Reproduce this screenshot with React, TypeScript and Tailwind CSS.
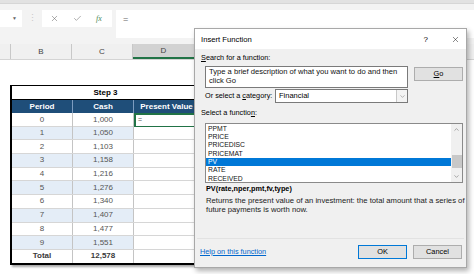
import React from 'react';
import { X, Check, ChevronDown, ChevronUp } from 'lucide-react';

const rows = [
  ['0', '1,000'],
  ['1', '1,050'],
  ['2', '1,103'],
  ['3', '1,158'],
  ['4', '1,216'],
  ['5', '1,276'],
  ['6', '1,340'],
  ['7', '1,407'],
  ['8', '1,477'],
  ['9', '1,551'],
];

const functions = ['PPMT', 'PRICE', 'PRICEDISC', 'PRICEMAT', 'PV', 'RATE', 'RECEIVED'];

function FormulaBar() {
  return (
    <>
      <div className="h-[4px] bg-[#e2e2e2] border-b border-[#d6d6d6]" />
      <div className="h-[40px] bg-[#f3f3f3] flex items-start pt-[6px]">
        <div className="w-[22px] h-[17px] bg-white flex items-center justify-end pr-[5px]">
          <span className="text-[5px] text-[#666]">▼</span>
        </div>
        <div className="w-[20px] h-[17px] flex items-center justify-center text-[9px] text-[#c8c8c8]">⋮</div>
        <div className="w-[70px] h-[17px] bg-white flex items-center pl-[8px] gap-[14px]">
          <X className="w-[9px] h-[9px] text-[#666]" strokeWidth={1.4} />
          <Check className="w-[9px] h-[9px] text-[#666]" strokeWidth={1.4} />
          <span className="text-[8px] italic text-[#4c8a5a] font-['Liberation_Serif',serif]">fx</span>
        </div>
        <div className="ml-[4px] flex-1 h-[28px] bg-white pl-[7px] pt-[3px] text-[9px] text-[#666]">=</div>
      </div>
      <div className="h-[16px] bg-[#f0f0f0] flex text-[8px] text-[#444] border-b border-[#d4d4d4]">
        <div className="w-[11px] border-r border-[#c8c8c8]" />
        <div className="w-[61px] border-r border-[#c8c8c8] flex items-center justify-center">B</div>
        <div className="w-[61px] border-r border-[#c8c8c8] flex items-center justify-center">C</div>
        <div className="w-[61px] bg-[#d2d2d2] border-b-2 border-[#217346] flex items-center justify-center">D</div>
        <div className="flex-1" />
      </div>
    </>
  );
}

function StepTable() {
  return (
    <div className="ml-[10px] mt-[25px] w-[190px] border-l-2 border-t border-r border-b-2 border-black shadow-[2px_2px_2px_rgba(0,0,0,0.35)] text-[8px]">
      <div className="h-[14px] flex items-center justify-center font-bold text-black border-b border-black">Step 3</div>
      <div className="h-[13px] bg-[#1f4e79] grid grid-cols-[61px_61px_1fr] text-white font-bold">
        <div className="flex items-center justify-center border-r border-[#7d9cc0]">Period</div>
        <div className="flex items-center justify-center border-r border-[#7d9cc0]">Cash</div>
        <div className="flex items-center justify-center">Present Value</div>
      </div>
      {rows.map(([p, c], i) => (
        <div
          key={p}
          className={`h-[13.7px] grid grid-cols-[61px_61px_1fr] text-[#555] border-b border-[#d6d6d6] ${i % 2 === 1 ? 'bg-[#e4edf7]' : 'bg-white'}`}
        >
          <div className="flex items-center justify-center border-r border-[#c4c4c4]">{p}</div>
          <div className="flex items-center justify-center border-r border-[#c4c4c4]">{c}</div>
          {i === 0 ? (
            <div className="border-2 border-[#217346] bg-white flex items-center pl-[2px] text-[7px]">=</div>
          ) : (
            <div className="bg-white" />
          )}
        </div>
      ))}
      <div className="h-[13px] grid grid-cols-[61px_61px_1fr] font-bold text-[#3a3a3a] bg-white">
        <div className="flex items-center justify-center border-r border-[#c4c4c4]">Total</div>
        <div className="flex items-center justify-center border-r border-[#c4c4c4]">12,578</div>
        <div />
      </div>
    </div>
  );
}

function Button({ label, primary }: { label: React.ReactNode; primary?: boolean }) {
  return (
    <div
      className={`w-[49px] h-[14px] flex items-center justify-center bg-[#e1e1e1] border ${primary ? 'border-[#0078d7] border-[1.5px]' : 'border-[#adadad]'} text-[7.4px] text-black`}
    >
      {label}
    </div>
  );
}

function InsertFunctionDialog() {
  return (
    <div className="absolute left-[194px] top-[28px] w-[273px] h-[240px] bg-[#f0f0f0] border border-[#a8a8a8] shadow-[2px_3px_5px_rgba(0,0,0,0.3)] flex flex-col text-[7.3px] text-black font-['Liberation_Sans',Arial,sans-serif]">
      <div className="h-[20px] bg-white flex items-center pl-[6px] pr-[6px] pt-[1px]">
        <span className="text-[7.7px]">Insert Function</span>
        <span className="ml-auto mr-[23px] text-[8px]">?</span>
        <X className="w-[9px] h-[9px]" strokeWidth={1.2} />
      </div>

      <div className="mt-[4px] ml-[6px] leading-[10px]">
        <span className="underline">S</span>earch for a function:
      </div>

      <div className="mt-[3px] ml-[10px] flex items-start">
        <div className="w-[203px] h-[22px] bg-white border border-[#7a7a7a] px-[3px] pt-[1px] leading-[8.6px] text-[7.6px] text-[#111] whitespace-nowrap overflow-hidden">
          Type a brief description of what you want to do and then
          <br />
          click Go
        </div>
        <div className="ml-[6px] mt-[1px]">
          <Button label={<><span className="underline">G</span>o</>} />
        </div>
      </div>

      <div className="mt-[1px] ml-[10px] flex items-center h-[14px]">
        <span className="w-[70px]">
          Or select a <span className="underline">c</span>ategory:
        </span>
        <div className="w-[133px] h-[14px] bg-white border border-[#7a7a7a] flex items-center">
          <span className="pl-[3px] flex-1 text-[7.5px]">Financial</span>
          <div className="w-[11px] h-full border-l border-[#c8c8c8] bg-[#f3f3f3] flex items-center justify-center">
            <ChevronDown className="w-[7px] h-[7px] text-[#666]" strokeWidth={1.5} />
          </div>
        </div>
      </div>

      <div className="mt-[5px] ml-[6px] leading-[10px]">
        Select a functio<span className="underline">n</span>:
      </div>

      <div className="mt-[5px] ml-[10px] w-[258px] h-[60px] bg-white border border-[#8a8a8a] flex">
        <div className="flex-1 pt-[0.5px] text-[6.8px]">
          {functions.map((f) => (
            <div
              key={f}
              className={`h-[8.4px] leading-[8.4px] pl-[2px] ${f === 'PV' ? 'bg-[#0078d7] text-white' : 'text-[#111]'}`}
            >
              {f}
            </div>
          ))}
        </div>
        <div className="w-[11px] bg-[#f0f0f0] flex flex-col items-center">
          <ChevronUp className="w-[7px] h-[7px] mt-[2px] text-[#555]" strokeWidth={1.6} />
          <div className="mt-[22px] w-[10px] h-[13px] bg-[#c8c8c8]" />
          <ChevronDown className="w-[7px] h-[7px] mt-auto mb-[2px] text-[#555]" strokeWidth={1.6} />
        </div>
      </div>

      <div className="mt-[1px] ml-[11px] leading-[10px] font-bold">PV(rate,nper,pmt,fv,type)</div>
      <div className="mt-[2px] ml-[11px] leading-[9px] text-[7.7px] text-[#222] whitespace-nowrap">
        Returns the present value of an investment: the total amount that a series of
        <br />
        future payments is worth now.
      </div>

      <div className="mt-auto border-t border-[#e2e2e2] mx-[2px]" />
      <div className="h-[28px] flex items-center pl-[5px] pr-[4px] pb-[2px]">
        <span className="text-[#0066cc] underline">Help on this function</span>
        <div className="ml-auto flex gap-[6px]">
          <Button label="OK" primary />
          <Button label="Cancel" />
        </div>
      </div>
    </div>
  );
}

export default function App() {
  return (
    <div className="relative w-[474px] h-[274px] overflow-hidden bg-white font-['Liberation_Sans',Arial,sans-serif]">
      <FormulaBar />
      <StepTable />
      <InsertFunctionDialog />
    </div>
  );
}
